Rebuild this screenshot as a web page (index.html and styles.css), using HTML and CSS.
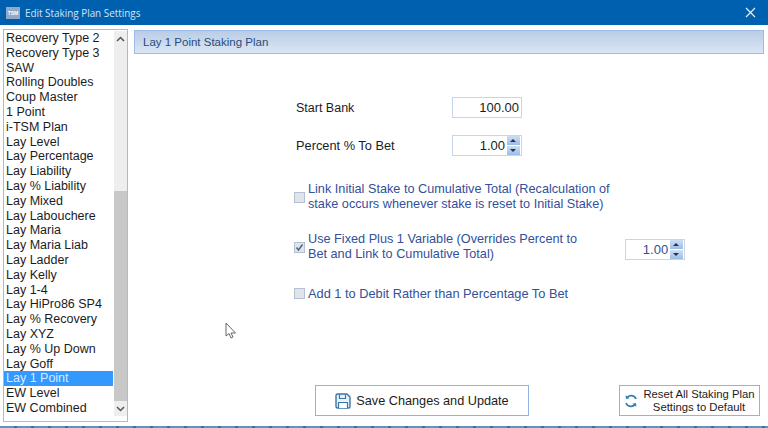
FILE: index.html
```html
<!DOCTYPE html>
<html lang="en">
<head>
    <meta charset="UTF-8">
    <meta name="viewport" content="width=device-width, initial-scale=1.0">
    <link rel="stylesheet" href="styles.css">
    <title>Edit Staking Plan Settings</title>
</head>
<body>
    <div class="title-bar">
        <span class="app-icon">TSM</span>
        <span class="title-text">Edit Staking Plan Settings</span>
        <svg class="close-icon" width="11" height="11" viewBox="0 0 11 11"><path d="M1 1L10 10M10 1L1 10" stroke="#e8f0f8" stroke-width="1.2" fill="none"/></svg>
    </div>
    <div class="main">
        <div class="plan-list">
            <ul class="plan-items">
                <li>Recovery Type 2</li>
                <li>Recovery Type 3</li>
                <li>SAW</li>
                <li>Rolling Doubles</li>
                <li>Coup Master</li>
                <li>1 Point</li>
                <li>i-TSM Plan</li>
                <li>Lay Level</li>
                <li>Lay Percentage</li>
                <li>Lay Liability</li>
                <li>Lay % Liability</li>
                <li>Lay Mixed</li>
                <li>Lay Labouchere</li>
                <li>Lay Maria</li>
                <li>Lay Maria Liab</li>
                <li>Lay Ladder</li>
                <li>Lay Kelly</li>
                <li>Lay 1-4</li>
                <li>Lay HiPro86 SP4</li>
                <li>Lay % Recovery</li>
                <li>Lay XYZ</li>
                <li>Lay % Up Down</li>
                <li>Lay Goff</li>
                <li class="selected">Lay 1 Point</li>
                <li>EW Level</li>
                <li>EW Combined</li>
            </ul>
            <div class="scrollbar">
                <div class="scroll-btn"><svg width="9" height="6" viewBox="0 0 9 6"><path d="M1 5L4.5 1.5L8 5" stroke="#555" stroke-width="1.5" fill="none"/></svg></div>
                <div class="scroll-track"></div>
                <div class="scroll-thumb"></div>
                <div class="scroll-btn"><svg width="9" height="6" viewBox="0 0 9 6"><path d="M1 1L4.5 4.5L8 1" stroke="#555" stroke-width="1.5" fill="none"/></svg></div>
            </div>
        </div>
        <div class="panel">
            <div class="panel-header">Lay 1 Point Staking Plan</div>
            <div class="form">
                <div class="field-row first">
                    <span class="field-label">Start Bank</span>
                    <div class="num-box wide">100.00</div>
                </div>
                <div class="field-row second">
                    <span class="field-label">Percent % To Bet</span>
                    <div class="num-box">
                        <span class="num-value">1.00</span>
                        <div class="spin"><span class="spin-up"></span><span class="spin-down"></span></div>
                    </div>
                </div>
                <div class="check-row link-row">
                    <span class="check"></span>
                    <span class="check-label">Link Initial Stake to Cumulative Total (Recalculation of<br>stake occurs whenever stake is reset to Initial Stake)</span>
                </div>
                <div class="check-row fixed-row">
                    <span class="check">
                        <svg width="9" height="9" viewBox="0 0 9 9"><path d="M1.5 4.5L3.5 7L7.5 1.5" stroke="#51617f" stroke-width="1.4" fill="none"/></svg>
                    </span>
                    <span class="check-label">Use Fixed Plus 1 Variable (Overrides Percent to<br>Bet and Link to Cumulative Total)</span>
                    <div class="num-box fixed-box">
                        <span class="num-value">1.00</span>
                        <div class="spin"><span class="spin-up"></span><span class="spin-down"></span></div>
                    </div>
                </div>
                <div class="check-row debit-row">
                    <span class="check"></span>
                    <span class="check-label">Add 1 to Debit Rather than Percentage To Bet</span>
                </div>
            </div>
            <div class="actions">
                <button class="btn save-btn">
                    <svg width="16" height="16" viewBox="0 0 16 16"><path d="M1 2.5A1.5 1.5 0 0 1 2.5 1H12L15 4V13.5A1.5 1.5 0 0 1 13.5 15H2.5A1.5 1.5 0 0 1 1 13.5Z" stroke="#3a76a8" stroke-width="1.4" fill="#eaf2f8"/><path d="M4.5 1.5V5.5H10.5V1.5" stroke="#3a76a8" stroke-width="1.2" fill="none"/><path d="M3.5 15V9.5H12.5V15" stroke="#3a76a8" stroke-width="1.2" fill="#fff"/></svg>
                    <span>Save Changes and Update</span>
                </button>
                <button class="btn reset-btn">
                    <svg width="14" height="14" viewBox="0 0 14 14"><path d="M12 5A5.3 5.3 0 0 0 2.8 3.8" stroke="#2f7fb5" stroke-width="1.7" fill="none"/><path d="M1.6 1.2L2 5L5.6 4.2Z" fill="#2f7fb5"/><path d="M2 9A5.3 5.3 0 0 0 11.2 10.2" stroke="#2f7fb5" stroke-width="1.7" fill="none"/><path d="M12.4 12.8L12 9L8.4 9.8Z" fill="#2f7fb5"/></svg>
                    <span>Reset All Staking Plan<br>Settings to Default</span>
                </button>
            </div>
        </div>
    </div>
    <div class="bottom-strip"></div>
    <svg class="cursor" width="12" height="18" viewBox="0 0 12 18"><path d="M1 1V14L4 11.5L6 16L8 15L6 11H10.5Z" fill="#fff" stroke="#666" stroke-width="1"/></svg>
</body>
</html>
```

FILE: styles.css
```css
html, body {
    height: 100%;
}

body {
    font-family: "Liberation Sans", Arial, sans-serif;
    font-size: 12.5px;
    margin: 0;
    padding: 0;
    background-color: #fff;
    color: #1c1c1c;
    display: flex;
    flex-direction: column;
    overflow: hidden;
}

.title-bar {
    height: 25px;
    flex-shrink: 0;
    background-color: #0060b0;
    color: #d5e3f1;
    display: flex;
    align-items: center;
    padding: 0 12px 0 6px;
    font-family: "Open Sans", sans-serif;
    font-size: 9.9px;
}

.app-icon {
    width: 14px;
    height: 12px;
    background-color: #8fa9c6;
    color: #fff;
    font-family: "Liberation Sans", Arial, sans-serif;
    font-size: 5px;
    font-weight: bold;
    line-height: 12px;
    text-align: center;
    margin-right: 5px;
}

.title-text {
    flex: 1;
}

.main {
    flex: 1;
    display: flex;
    padding: 4px 4px 4px 3px;
    gap: 6px;
    min-height: 0;
}

.plan-list {
    width: 125px;
    height: 393px;
    box-sizing: border-box;
    border: 1px solid #9dbde6;
    display: flex;
    padding: 1px 0 0;
    background-color: #fff;
}

.plan-items {
    list-style: none;
    margin: 0;
    padding: 0;
    flex: 1;
    line-height: 14.8px;
}

.plan-items li {
    height: 14.8px;
    padding-left: 2px;
    white-space: nowrap;
}

.plan-items .selected {
    background-color: #3399ff;
    color: #d8eaff;
}

.scrollbar {
    width: 13px;
    height: 385px;
    margin-left: 1px;
    background-color: #eeeeee;
    display: flex;
    flex-direction: column;
}

.scroll-btn {
    height: 15px;
    flex-shrink: 0;
    display: flex;
    align-items: center;
    justify-content: center;
}

.scroll-track {
    height: 145px;
    flex-shrink: 0;
}

.scroll-thumb {
    flex: 1;
    background-color: #c8c8c8;
}

.panel {
    flex: 1;
    display: flex;
    flex-direction: column;
    min-width: 0;
}

.panel-header {
    height: 24px;
    box-sizing: border-box;
    margin-top: 1px;
    border: 1px solid #9dbde6;
    background: linear-gradient(#b9cde6, #dae6f3);
    color: #2c4a7c;
    font-size: 11.5px;
    line-height: 23px;
    padding-left: 8px;
}

.form {
    flex: 1;
    padding-left: 162px;
}

.field-row {
    display: flex;
    align-items: center;
}

.field-row.first {
    margin-top: 43px;
}

.field-row.second {
    margin-top: 17px;
}

.field-label {
    width: 156px;
}

.field-row.second .field-label {
    font-size: 12.8px;
}

.num-box {
    width: 70px;
    height: 21px;
    box-sizing: border-box;
    border: 1px solid #c5d6ec;
    display: flex;
    align-items: center;
    justify-content: flex-end;
    font-size: 13px;
    background-color: #fff;
}

.num-box.wide {
    padding-right: 2px;
}

.num-value {
    padding-right: 2px;
}

.spin {
    width: 13px;
    height: 19px;
    margin-right: 1px;
    display: flex;
    flex-direction: column;
    gap: 1px;
}

.spin-up,
.spin-down {
    flex: 1;
    background: linear-gradient(#cfdef2, #9dbce4);
    position: relative;
}

.spin-up::after,
.spin-down::after {
    content: "";
    position: absolute;
    left: 3px;
    top: 3px;
    border-left: 3px solid transparent;
    border-right: 3px solid transparent;
}

.spin-up::after {
    border-bottom: 3px solid #1c3560;
}

.spin-down::after {
    border-top: 3px solid #1c3560;
}

.check-row {
    display: flex;
    align-items: center;
    margin-left: -2px;
    color: #33509a;
    font-size: 12.7px;
}

.check {
    width: 11px;
    height: 11px;
    box-sizing: border-box;
    border: 1px solid #b5c0d2;
    background-color: #dfe3ea;
    margin-right: 3px;
    flex-shrink: 0;
    display: flex;
    align-items: center;
    justify-content: center;
}

.check-label {
    line-height: 15px;
    white-space: nowrap;
}

.link-row {
    margin-top: 26px;
}

.fixed-row {
    margin-top: 20px;
}

.fixed-box {
    margin: 4px 0 0 48px;
    width: 60px;
}

.debit-row {
    margin-top: 24px;
    font-size: 12.8px;
}

.actions {
    display: flex;
    align-items: flex-start;
    padding-left: 181px;
    padding-bottom: 6px;
}

.btn {
    font-family: inherit;
    background-color: #fff;
    border: 1px solid #8fb4e3;
    color: #1c1c1c;
    display: flex;
    align-items: center;
    justify-content: center;
    cursor: pointer;
    padding: 0;
}

.save-btn {
    width: 214px;
    height: 31px;
    font-size: 12.7px;
    gap: 5px;
}

.reset-btn {
    width: 141px;
    height: 31px;
    margin-left: 90px;
    font-size: 11.3px;
    line-height: 13px;
    gap: 5px;
}

.bottom-strip {
    height: 2px;
    flex-shrink: 0;
    background-color: #5f93c4;
    border-bottom: 1px solid transparent;
    box-sizing: border-box;
    background-image: repeating-linear-gradient(90deg, #5f93c4 0, #5f93c4 14px, #4b6a88 14px, #4b6a88 17px);
}

.cursor {
    position: absolute;
    left: 225px;
    top: 322px;
}
```
